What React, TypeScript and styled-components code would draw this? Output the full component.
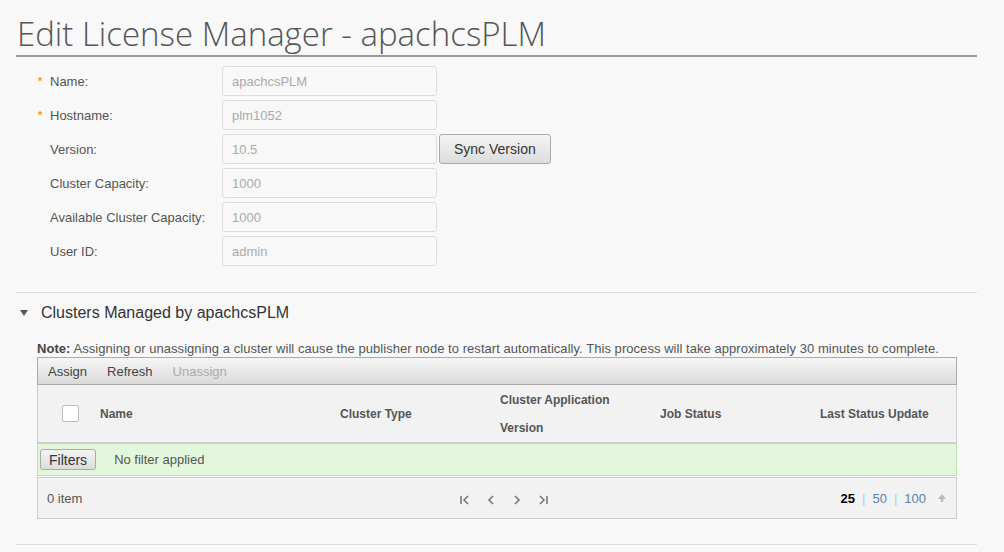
import styled, { createGlobalStyle } from "styled-components";

const GlobalStyle = createGlobalStyle`
  html, body {
    margin: 0;
    padding: 0;
    background: #f8f8f8;
    font-family: "Liberation Sans", Arial, sans-serif;
    color: #555;
  }
`;

const Page = styled.div`
  width: 1004px;
  height: 552px;
  overflow: hidden;
  padding: 0 27px 0 16px;
  box-sizing: border-box;
`;

const Title = styled.h1`
  margin: 0;
  padding-top: 14px;
  padding-left: 1px;
  height: 41px;
  font-family: "Open Sans", sans-serif;
  font-weight: 300;
  font-size: 33px;
  line-height: 40px;
  color: #555;
  border-bottom: 2px solid #999;
`;

const Form = styled.div`
  display: flex;
  flex-direction: column;
  gap: 4px;
  padding: 9px 0 26px 0;
  border-bottom: 1px solid #ddd;
`;

const Row = styled.div`
  display: flex;
  align-items: center;
  height: 30px;
`;

const Label = styled.div`
  position: relative;
  width: 172px;
  padding-left: 34px;
  font-size: 13px;
  color: #555;
`;

const Required = styled.span`
  position: absolute;
  left: 22px;
  top: 1px;
  color: #f39c12;
  font-size: 11px;
  font-weight: bold;
`;

const Input = styled.div`
  width: 204px;
  height: 28px;
  border: 1px solid #ddd;
  border-radius: 3px;
  padding-left: 9px;
  display: flex;
  align-items: center;
  font-size: 13px;
  color: #aaa;
  background: #f8f8f8;
`;

const Button = styled.button<{ $small?: boolean }>`
  font-family: "Liberation Sans", Arial, sans-serif;
  font-size: 14px;
  color: #333;
  height: ${(p) => (p.$small ? "21px" : "30px")};
  padding: ${(p) => (p.$small ? "0 8px" : "0 14px")};
  margin-left: ${(p) => (p.$small ? "0" : "2px")};
  border: 1px solid #aaa;
  border-radius: 3px;
  background: linear-gradient(#f4f4f4, #dcdcdc);
  cursor: pointer;
`;

const SectionHead = styled.div`
  display: flex;
  align-items: center;
  gap: 12px;
  height: 40px;
  padding-left: 3px;
  font-size: 16px;
  color: #333;
`;

const Note = styled.div`
  margin: 8px 0 0 21px;
  font-size: 13px;
  line-height: 16px;
  letter-spacing: 0.05px;
  color: #555;
  white-space: nowrap;
  b {
    color: #444;
  }
`;

const Table = styled.div`
  margin-left: 21px;
  width: 920px;
`;

const Toolbar = styled.div`
  display: flex;
  gap: 20px;
  height: 26px;
  align-items: center;
  padding-left: 10px;
  border: 1px solid #aaa;
  background: linear-gradient(#f6f6f6, #dadada);
  font-size: 13px;
`;

const ToolItem = styled.span<{ $disabled?: boolean }>`
  color: ${(p) => (p.$disabled ? "#aaa" : "#444")};
`;

const HeadRow = styled.div`
  display: grid;
  grid-template-columns: 51px 240px 160px 160px 160px 1fr;
  align-items: center;
  height: 57px;
  border-left: 1px solid #ccc;
  border-right: 1px solid #ccc;
  border-bottom: 1px solid #ccc;
  background: #f2f2f2;
  font-size: 12px;
  font-weight: bold;
  color: #555;
`;

const HeadCell = styled.div`
  padding-left: 11px;
  line-height: 28px;
`;

const CheckBox = styled.div`
  width: 15px;
  height: 15px;
  margin-left: 24px;
  border: 1px solid #bbb;
  border-radius: 2px;
  background: #fff;
`;

const FilterRow = styled.div`
  display: flex;
  align-items: center;
  gap: 18px;
  height: 31px;
  padding-left: 2px;
  border: 1px solid #b9e0ad;
  background: #e3f7dc;
  font-size: 13px;
  color: #555;
`;

const Footer = styled.div`
  display: grid;
  grid-template-columns: 1fr auto 1fr;
  align-items: center;
  height: 40px;
  margin-top: 1px;
  padding: 0 8px 0 9px;
  border: 1px solid #ccc;
  background: #f2f2f2;
  font-size: 13px;
  color: #555;
`;

const Pager = styled.div`
  display: flex;
  gap: 14px;
  padding: 3px 0 0 13px;
  color: #777;
`;

const Sizes = styled.div`
  justify-self: end;
  display: flex;
  align-items: center;
  gap: 7px;
  font-size: 13px;
`;

const Size = styled.span<{ $active?: boolean }>`
  color: ${(p) => (p.$active ? "#000" : "#5a7fb0")};
  font-weight: ${(p) => (p.$active ? "bold" : "normal")};
`;

const Sep = styled.span`
  color: #9ad0e8;
`;

const BottomLine = styled.div`
  margin-top: 25px;
  border-bottom: 1px solid #ddd;
`;

const fields: { label: string; value: string; req?: boolean; sync?: boolean }[] = [
  { label: "Name:", value: "apachcsPLM", req: true },
  { label: "Hostname:", value: "plm1052", req: true },
  { label: "Version:", value: "10.5", sync: true },
  { label: "Cluster Capacity:", value: "1000" },
  { label: "Available Cluster Capacity:", value: "1000" },
  { label: "User ID:", value: "admin" },
];

const Icon = ({ d }: { d: string }) => (
  <svg width="12" height="12" viewBox="0 0 12 12" fill="none" stroke="#777" strokeWidth="1.6">
    <path d={d} />
  </svg>
);

export default function App() {
  return (
    <Page>
      <GlobalStyle />
      <Title>Edit License Manager - apachcsPLM</Title>

      <Form>
        {fields.map((f) => (
          <Row key={f.label}>
            <Label>
              {f.req && <Required>*</Required>}
              {f.label}
            </Label>
            <Input>{f.value}</Input>
            {f.sync && <Button>Sync Version</Button>}
          </Row>
        ))}
      </Form>

      <SectionHead>
        <svg width="10" height="8" viewBox="0 0 10 8">
          <path d="M1 1 H9 L5 7 Z" fill="#555" />
        </svg>
        Clusters Managed by apachcsPLM
      </SectionHead>

      <Note>
        <b>Note:</b> Assigning or unassigning a cluster will cause the publisher node to restart
        automatically. This process will take approximately 30 minutes to complete.
      </Note>

      <Table>
        <Toolbar>
          <ToolItem>Assign</ToolItem>
          <ToolItem>Refresh</ToolItem>
          <ToolItem $disabled>Unassign</ToolItem>
        </Toolbar>
        <HeadRow>
          <CheckBox />
          <HeadCell>Name</HeadCell>
          <HeadCell>Cluster Type</HeadCell>
          <HeadCell>
            Cluster Application
            <br />
            Version
          </HeadCell>
          <HeadCell>Job Status</HeadCell>
          <HeadCell>Last Status Update</HeadCell>
        </HeadRow>
        <FilterRow>
          <Button $small>Filters</Button>
          No filter applied
        </FilterRow>
        <Footer>
          <span>0 item</span>
          <Pager>
            <Icon d="M2 2 V10 M9 2 L5 6 L9 10" />
            <Icon d="M8 2 L4 6 L8 10" />
            <Icon d="M4 2 L8 6 L4 10" />
            <Icon d="M3 2 L7 6 L3 10 M10 2 V10" />
          </Pager>
          <Sizes>
            <Size $active>25</Size>
            <Sep>|</Sep>
            <Size>50</Size>
            <Sep>|</Sep>
            <Size>100</Size>
            <svg width="12" height="12" viewBox="0 0 12 12" style={{ marginLeft: 3 }}>
              <path d="M6 2 L10 7 H7.2 V10 H4.8 V7 H2 Z" fill="#bbb" />
            </svg>
          </Sizes>
        </Footer>
      </Table>
      <BottomLine />
    </Page>
  );
}
